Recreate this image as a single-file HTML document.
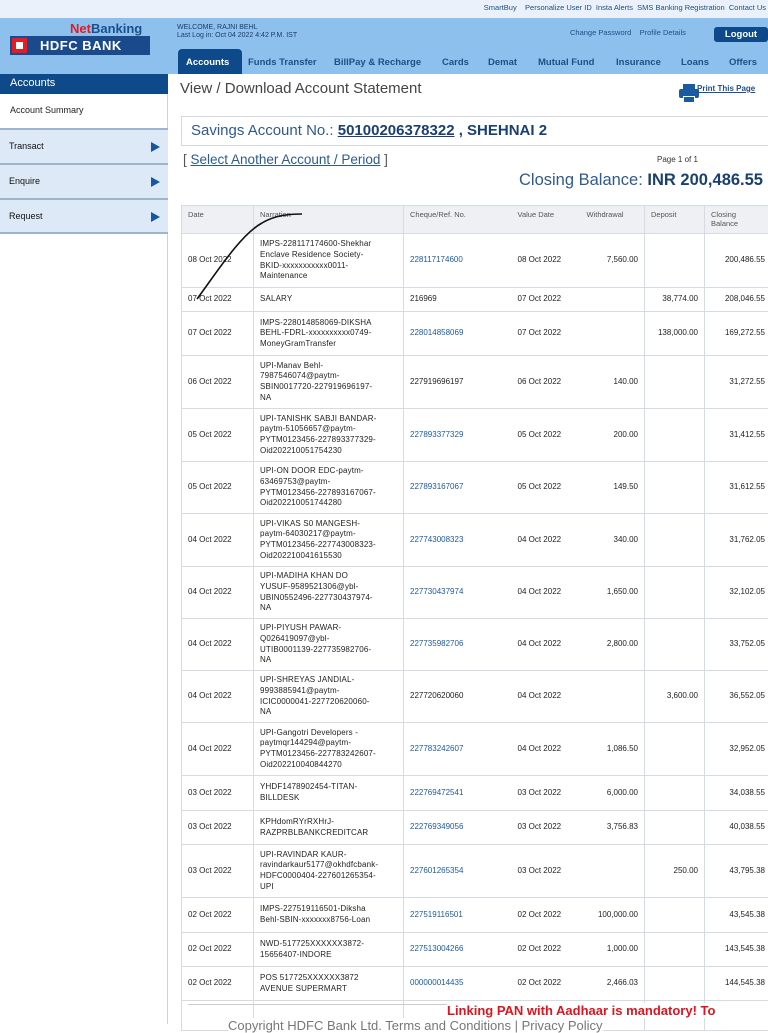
<!DOCTYPE html>
<html><head><meta charset="utf-8"><style>
*{margin:0;padding:0;box-sizing:border-box}
body{width:768px;height:1024px;overflow:hidden;background:#fff;font-family:"Liberation Sans",Arial,sans-serif;position:relative}
.abs{position:absolute}
#top{left:0;top:0;width:768px;height:18px;background:#eaf1fa;font-size:7.5px;color:#1d4e85;text-align:right;padding:3px 2px 0 0}
#hdr{left:0;top:18px;width:768px;height:56px;background:#8dc0ec}
.tab{position:absolute;top:57px;font-size:9.5px;font-weight:bold;color:#1f4f86}
#side{left:0;top:74px;width:168px;height:950px;border-right:1px solid #c8d3e0}
.sm{position:absolute;left:0;width:168px;font-size:9px;color:#111;padding-left:9px;background:#dde9f6;border-top:2px solid #9db4cf}
.sm b{position:absolute;right:8px;top:12px;width:0;height:0;border-left:9px solid #1757a0;border-top:5px solid transparent;border-bottom:5px solid transparent}
table{position:absolute;left:181px;top:205px;width:590px;border-collapse:collapse;table-layout:fixed;font-size:8px;color:#222}
td{border:1px solid #d5dbe3;padding:0 6px;vertical-align:middle;line-height:10.6px;white-space:nowrap;overflow:hidden}
th{background:#eef0f3;border:1px solid #d5dbe3;font-weight:normal;text-align:left;vertical-align:top;padding:4px 6px;color:#555;font-size:7.5px;height:28px;line-height:9px}
td.r{text-align:right}
td.n{letter-spacing:.15px}
a.l{color:#1e5aa0;text-decoration:none}
.nb{border-left:none}.nr{border-right:none}
tr.nt td{border-top:none}
</style></head><body>
<div id="top" class="abs">SmartBuy&nbsp;&nbsp;&nbsp; Personalize User ID&nbsp; Insta Alerts&nbsp; SMS Banking Registration&nbsp; Contact Us</div>
<div id="hdr" class="abs">
 <div class="abs" style="left:70px;top:3px;font-size:13px;font-weight:bold;color:#e41c24">Net<span style="color:#1a4f8e">Banking</span></div>
 <div class="abs" style="left:10px;top:18px;width:140px;height:19px;background:#1a4a8c;color:#fff;font-weight:bold;font-size:13px;padding-left:30px;line-height:19px;letter-spacing:.5px">HDFC BANK</div>
 <div class="abs" style="left:12px;top:20px;width:15px;height:15px;background:#e41c24"><div style="margin:4px;width:7px;height:7px;background:#fff"></div></div>
 <div class="abs" style="left:177px;top:6px;font-size:7px;color:#1c3b66;line-height:8px">WELCOME, RAJNI BEHL<br>Last Log in: Oct 04 2022 4:42 P.M. IST</div>
 <div class="abs" style="left:570px;top:10px;font-size:7.5px;color:#1f4f86">Change Password&nbsp;&nbsp;&nbsp; Profile Details</div>
 <div class="abs" style="left:714px;top:9px;width:54px;height:15px;background:#0e4a8a;border-radius:3px;color:#fff;font-size:9.5px;font-weight:bold;text-align:center;line-height:15px">Logout</div>
 <div class="abs" style="left:178px;top:31px;width:64px;height:25px;background:#0e4a8a;border-radius:4px 4px 0 0"></div>
</div>
<div class="tab" style="left:186px;color:#fff">Accounts</div>
<div class="tab" style="left:248px">Funds Transfer</div>
<div class="tab" style="left:334px">BillPay &amp; Recharge</div>
<div class="tab" style="left:442px">Cards</div>
<div class="tab" style="left:488px">Demat</div>
<div class="tab" style="left:538px">Mutual Fund</div>
<div class="tab" style="left:616px">Insurance</div>
<div class="tab" style="left:681px">Loans</div>
<div class="tab" style="left:729px">Offers</div>
<div id="side" class="abs">
 <div class="abs" style="left:0;top:0;width:168px;height:20px;background:#0e4a8a;color:#fff;font-size:11px;padding:3px 10px">Accounts</div>
 <div class="abs" style="left:10px;top:31px;font-size:9px;color:#222">Account Summary</div>
 <div class="sm" style="top:54px;height:35px;line-height:33px">Transact<b></b></div>
 <div class="sm" style="top:89px;height:35px;line-height:33px">Enquire<b></b></div>
 <div class="sm" style="top:124px;height:36px;line-height:33px;border-bottom:2px solid #9db4cf">Request<b></b></div>
</div>
<div class="abs" style="left:180px;top:80px;font-size:15px;color:#444">View / Download Account Statement</div>
<div class="abs" style="left:683px;top:84px;width:12px;height:5px;background:#1a5aa3"></div>
<div class="abs" style="left:679px;top:89px;width:20px;height:9px;background:#1a5aa3;border-radius:2px"></div>
<div class="abs" style="left:683px;top:96px;width:12px;height:7px;background:#1a5aa3;border:1px solid #fff"></div>
<div class="abs" style="left:697px;top:84px;font-size:8px;color:#1e4f8e;text-decoration:underline;font-weight:bold">Print This Page</div>
<div class="abs" style="left:181px;top:116px;width:590px;height:30px;border:1px solid #d4d9e0;font-size:15px;color:#2f5a8e;padding:5px 9px">Savings Account No.: <span style="font-weight:bold;color:#1a3f73;text-decoration:underline">50100206378322</span><span style="font-weight:bold;color:#1a3f73"> , SHEHNAI 2</span></div>
<div class="abs" style="left:183px;top:152px;font-size:13.5px;color:#555">[ <span style="color:#2f5a8e;text-decoration:underline">Select Another Account / Period</span> ]</div>
<div class="abs" style="left:657px;top:155px;font-size:8px;color:#333">Page 1 of 1</div>
<div class="abs" style="right:5px;top:171px;font-size:16.5px;color:#2f5a8e;white-space:nowrap">Closing Balance: <b style="color:#1a3f73">INR 200,486.55</b></div>
<table>
<colgroup><col style="width:72px"><col style="width:150px"><col style="width:108px"><col style="width:69px"><col style="width:64px"><col style="width:60px"><col style="width:67px"></colgroup>
<tr><th>Date</th><th>Narration</th><th class="nr">Cheque/Ref. No.</th><th class="nr nb">Value Date</th><th class="nb">Withdrawal</th><th>Deposit</th><th>Closing<br>Balance</th></tr>
<tr style="height:54px"><td>08 Oct 2022</td><td class="n">IMPS-228117174600-Shekhar<br>Enclave Residence Society-<br>BKID-xxxxxxxxxxx0011-<br>Maintenance</td><td class="nr"><a class="l">228117174600</a></td><td class="nr nb">08 Oct 2022</td><td class="r nb">7,560.00</td><td></td><td class="r">200,486.55</td></tr>
<tr style="height:24px"><td>07 Oct 2022</td><td class="n">SALARY</td><td class="nr">216969</td><td class="nr nb">07 Oct 2022</td><td class="nb"></td><td class="r">38,774.00</td><td class="r">208,046.55</td></tr>
<tr style="height:44px"><td>07 Oct 2022</td><td class="n">IMPS-228014858069-DIKSHA<br>BEHL-FDRL-xxxxxxxxxx0749-<br>MoneyGramTransfer</td><td class="nr"><a class="l">228014858069</a></td><td class="nr nb">07 Oct 2022</td><td class="nb"></td><td class="r">138,000.00</td><td class="r">169,272.55</td></tr>
<tr style="height:53px"><td>06 Oct 2022</td><td class="n">UPI-Manav Behl-<br>7987546074@paytm-<br>SBIN0017720-227919696197-<br>NA</td><td class="nr">227919696197</td><td class="nr nb">06 Oct 2022</td><td class="r nb">140.00</td><td></td><td class="r">31,272.55</td></tr>
<tr style="height:53px"><td>05 Oct 2022</td><td class="n">UPI-TANISHK SABJI BANDAR-<br>paytm-51056657@paytm-<br>PYTM0123456-227893377329-<br>Oid202210051754230</td><td class="nr"><a class="l">227893377329</a></td><td class="nr nb">05 Oct 2022</td><td class="r nb">200.00</td><td></td><td class="r">31,412.55</td></tr>
<tr style="height:52px"><td>05 Oct 2022</td><td class="n">UPI-ON DOOR EDC-paytm-<br>63469753@paytm-<br>PYTM0123456-227893167067-<br>Oid202210051744280</td><td class="nr"><a class="l">227893167067</a></td><td class="nr nb">05 Oct 2022</td><td class="r nb">149.50</td><td></td><td class="r">31,612.55</td></tr>
<tr style="height:53px"><td>04 Oct 2022</td><td class="n">UPI-VIKAS S0 MANGESH-<br>paytm-64030217@paytm-<br>PYTM0123456-227743008323-<br>Oid202210041615530</td><td class="nr"><a class="l">227743008323</a></td><td class="nr nb">04 Oct 2022</td><td class="r nb">340.00</td><td></td><td class="r">31,762.05</td></tr>
<tr style="height:52px"><td>04 Oct 2022</td><td class="n">UPI-MADIHA KHAN DO<br>YUSUF-9589521306@ybl-<br>UBIN0552496-227730437974-<br>NA</td><td class="nr"><a class="l">227730437974</a></td><td class="nr nb">04 Oct 2022</td><td class="r nb">1,650.00</td><td></td><td class="r">32,102.05</td></tr>
<tr style="height:52px"><td>04 Oct 2022</td><td class="n">UPI-PIYUSH PAWAR-<br>Q026419097@ybl-<br>UTIB0001139-227735982706-<br>NA</td><td class="nr"><a class="l">227735982706</a></td><td class="nr nb">04 Oct 2022</td><td class="r nb">2,800.00</td><td></td><td class="r">33,752.05</td></tr>
<tr class="nt" style="height:52px"><td>04 Oct 2022</td><td class="n">UPI-SHREYAS JANDIAL-<br>9993885941@paytm-<br>ICIC0000041-227720620060-<br>NA</td><td class="nr">227720620060</td><td class="nr nb">04 Oct 2022</td><td class="nb"></td><td class="r">3,600.00</td><td class="r">36,552.05</td></tr>
<tr class="nt" style="height:53px"><td>04 Oct 2022</td><td class="n">UPI-Gangotri Developers -<br>paytmqr144294@paytm-<br>PYTM0123456-227783242607-<br>Oid202210040844270</td><td class="nr"><a class="l">227783242607</a></td><td class="nr nb">04 Oct 2022</td><td class="r nb">1,086.50</td><td></td><td class="r">32,952.05</td></tr>
<tr style="height:35px"><td>03 Oct 2022</td><td class="n">YHDF1478902454-TITAN-<br>BILLDESK</td><td class="nr"><a class="l">222769472541</a></td><td class="nr nb">03 Oct 2022</td><td class="r nb">6,000.00</td><td></td><td class="r">34,038.55</td></tr>
<tr class="nt" style="height:34px"><td>03 Oct 2022</td><td class="n">KPHdomRYrRXHrJ-<br>RAZPRBLBANKCREDITCAR</td><td class="nr"><a class="l">222769349056</a></td><td class="nr nb">03 Oct 2022</td><td class="r nb">3,756.83</td><td></td><td class="r">40,038.55</td></tr>
<tr style="height:53px"><td>03 Oct 2022</td><td class="n">UPI-RAVINDAR KAUR-<br>ravindarkaur5177@okhdfcbank-<br>HDFC0000404-227601265354-<br>UPI</td><td class="nr"><a class="l">227601265354</a></td><td class="nr nb">03 Oct 2022</td><td class="nb"></td><td class="r">250.00</td><td class="r">43,795.38</td></tr>
<tr style="height:35px"><td>02 Oct 2022</td><td class="n">IMPS-227519116501-Diksha<br>Behl-SBIN-xxxxxxx8756-Loan</td><td class="nr"><a class="l">227519116501</a></td><td class="nr nb">02 Oct 2022</td><td class="r nb">100,000.00</td><td></td><td class="r">43,545.38</td></tr>
<tr style="height:34px"><td>02 Oct 2022</td><td class="n">NWD-517725XXXXXX3872-<br>15656407-INDORE</td><td class="nr"><a class="l">227513004266</a></td><td class="nr nb">02 Oct 2022</td><td class="r nb">1,000.00</td><td></td><td class="r">143,545.38</td></tr>
<tr style="height:34px"><td>02 Oct 2022</td><td class="n">POS 517725XXXXXX3872<br>AVENUE SUPERMART</td><td class="nr"><a class="l">000000014435</a></td><td class="nr nb">02 Oct 2022</td><td class="r nb">2,466.03</td><td></td><td class="r">144,545.38</td></tr>
<tr style="height:30px"><td></td><td></td><td class="nr"></td><td class="nr nb"></td><td class="nb"></td><td></td><td></td></tr>
</table>
<div class="abs" style="left:188px;top:1004px;width:440px;height:1px;background:#ccc"></div>
<div class="abs" style="left:447px;top:1003px;font-size:13px;font-weight:bold;color:#e0141e;white-space:nowrap;background:#fff;padding-right:20px">Linking PAN with Aadhaar is mandatory! To</div>
<div class="abs" style="left:228px;top:1018px;font-size:13px;color:#777;white-space:nowrap;background:#fff">Copyright HDFC Bank Ltd. Terms and Conditions | Privacy Policy</div>
<svg class="abs" style="left:0;top:0" width="768" height="1024"><path d="M197 299 C215 275 240 235 262 223 C275 215 290 214 302 214" fill="none" stroke="#111" stroke-width="1.6"/></svg>
</body></html>
